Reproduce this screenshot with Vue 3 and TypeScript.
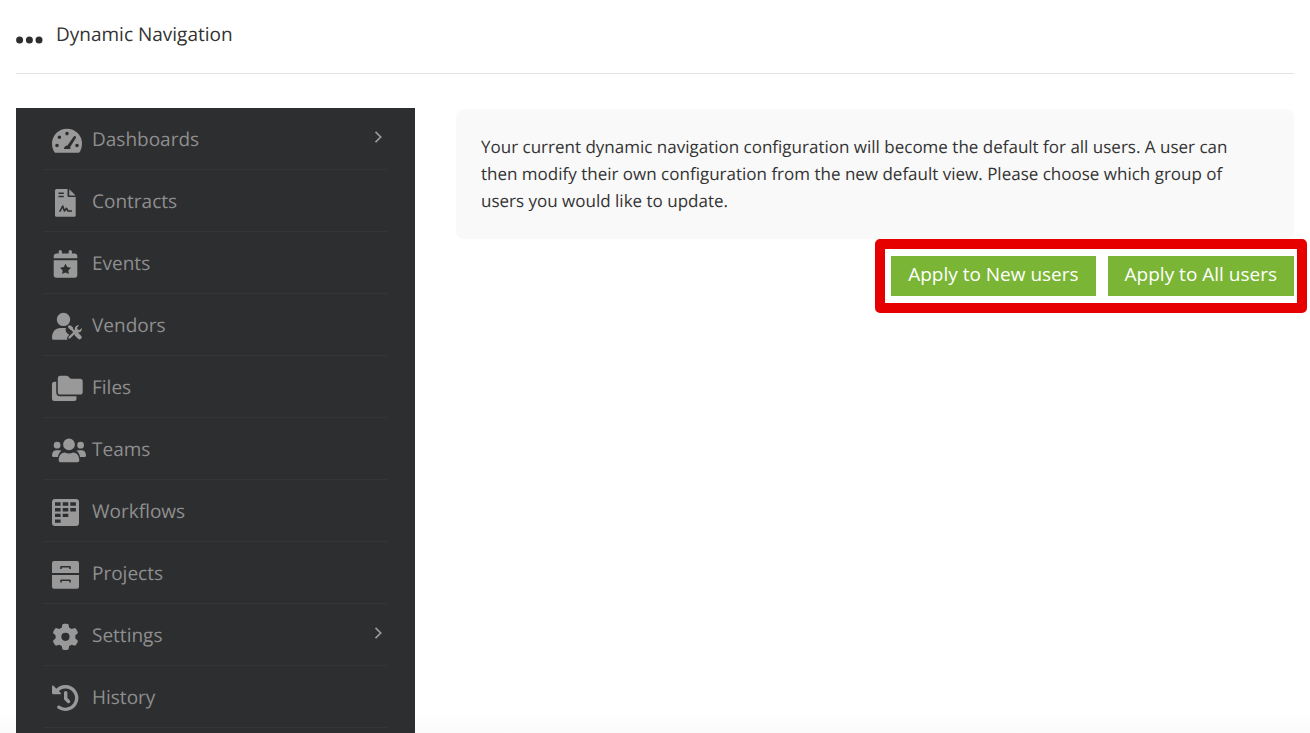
<script setup lang="ts">
interface Icon {
  body?: string
  outline?: string
  cut?: string
  line?: string
  top?: string
  topLine?: string
  transform?: string
}

interface NavItem {
  label: string
  icon: Icon
  expandable?: boolean
}

const gear =
  'M495.9 166.6c3.2 8.7 .5 18.4-6.4 24.6l-43.3 39.4c1.1 8.3 1.7 16.8 1.7 25.4s-.6 17.1-1.7 25.4l43.3 39.4c6.9 6.2 9.6 15.9 6.4 24.6c-4.4 11.9-9.7 23.3-15.8 34.3l-4.7 8.1c-6.6 11-14 21.4-22.1 31.2c-5.9 7.2-15.7 9.6-24.5 6.8l-55.7-17.7c-13.4 10.3-28.2 18.9-44 25.4l-12.5 57.1c-2 9.1-9 16.3-18.2 17.8c-13.8 2.3-28 3.5-42.5 3.5s-28.7-1.2-42.5-3.5c-9.2-1.5-16.2-8.7-18.2-17.8l-12.5-57.1c-15.8-6.5-30.6-15.1-44-25.4L83.1 425.9c-8.8 2.8-18.6 .3-24.5-6.8c-8.1-9.8-15.5-20.2-22.1-31.2l-4.7-8.1c-6.1-11-11.4-22.4-15.8-34.3c-3.2-8.7-.5-18.4 6.4-24.6l43.3-39.4C64.6 273.1 64 264.6 64 256s.6-17.1 1.7-25.4L22.4 191.2c-6.9-6.2-9.6-15.9-6.4-24.6c4.4-11.9 9.7-23.3 15.8-34.3l4.7-8.1c6.6-11 14-21.4 22.1-31.2c5.9-7.2 15.7-9.6 24.5-6.8l55.7 17.7c13.4-10.3 28.2-18.9 44-25.4l12.5-57.1c2-9.1 9-16.3 18.2-17.8C227.3 1.2 241.5 0 256 0s28.7 1.2 42.5 3.5c9.2 1.5 16.2 8.7 18.2 17.8l12.5 57.1c15.8 6.5 30.6 15.1 44 25.4l55.7-17.7c8.8-2.8 18.6-.3 24.5 6.8c8.1 9.8 15.5 20.2 22.1 31.2l4.7 8.1c6.1 11 11.4 22.4 15.8 34.3zM256 336a80 80 0 1 0 0-160 80 80 0 1 0 0 160z'

const items: NavItem[] = [
  {
    label: 'Dashboards',
    expandable: true,
    icon: {
      body: 'M15 3.7a15 15 0 0 1 15 15c0 2.9-.7 5.4-2 7.8-.5.9-1 1.2-2 1.2H4c-1 0-1.5-.3-2-1.2A15.300 15.300 0 0 1 0 18.700a15 15 0 0 1 15-15z',
      cut: 'M13.2 8.600a1.800 1.800 0 1 0 3.600 0a1.800 1.800 0 1 0-3.600 0zM5.600 12.300a1.800 1.800 0 1 0 3.600 0a1.800 1.800 0 1 0-3.600 0zM3.200 20.500a1.800 1.800 0 1 0 3.600 0a1.800 1.800 0 1 0-3.600 0zM23.200 20.500a1.800 1.800 0 1 0 3.600 0a1.800 1.800 0 1 0-3.600 0zM12 24c0-2.200 1.400-3.600 3.400-3.600l6.400-8.800c1-1.300 2.800-.1 2 1.300l-5.600 9c.3.700.3 1.400.1 2.100z'
    }
  },
  {
    label: 'Contracts',
    icon: {
      body: 'M4.500 2H15.500V8.500C15.500 9.500 16 10 17 10H23.700V28.200Q23.700 29.700 22.200 29.700H4.500Q3 29.700 3 28.200V3.500Q3 2 4.500 2zM17.300 2.200L23.600 8.500H17.300z',
      line: 'M6.500 6.200H11.800M6.500 9.500H11.800M7.200 24H8.200L10.700 19L12.400 24L14.500 21.300L16 24H20'
    }
  },
  {
    label: 'Events',
    icon: {
      body: 'M1.700 9.200V7.200Q1.700 4.500 4.300 4.500H6.700V2.500Q6.700 1 8.300 1T9.900 2.500V4.500H16.700V2.500Q16.700 1 18.300 1T19.900 2.500V4.500H22.600Q25.300 4.500 25.300 7.200V9.200zM1.700 11.200H25.300V26Q25.300 28.700 22.600 28.700H4.300Q1.700 28.700 1.700 26z',
      cut: 'M13.500 14.700L15.200 18.100L19 18.700L16.300 21.400L16.900 25.100L13.500 23.400L10.100 25.100L10.700 21.400L8 18.700L11.800 18.100z'
    }
  },
  {
    label: 'Vendors',
    icon: {
      body: 'M4.800 8.400a6.700 6.700 0 1 0 13.400 0a6.700 6.700 0 1 0-13.400 0zM0 27.200C0 20.500 3.500 17 8.500 17h5.600c-.9 1.700-.5 3.900 1.100 5.300l2 1.500-1.700 2.100c-.7 1-.6 1.900.1 2.800H1.500Q0 28.700 0 27.200z',
      topLine: 'M17.200 15.500L27.700 26M17.500 26.500L24.500 19.500',
      top: 'M16 15.200l2.800-.8 2.200 2.200v2.200l-2.200.2-2.300-2zM23.200 19.800c-1.400-3 .8-5.900 4-5.500l-2.100 2.300.4 2 2 .5 2.200-2.200c.8 3.200-2.300 5.500-5.200 4.200zM22.700 22.700l2.600-1.700 4 4c1.500 1.700-1.200 4.500-3 3l-3.800-3.800z'
    }
  },
  {
    label: 'Files',
    icon: {
      body: 'M8.500 2.700H14.600C16.800 2.700 17.400 5.800 19.400 5.800H28Q30.700 5.800 30.700 8.500V18.900Q30.700 21.600 28 21.600H8.500Q5.800 21.600 5.800 18.900V5.400Q5.800 2.700 8.500 2.700zM2.500 8.800H4.200V19C4.200 21.800 5.500 23.200 8.300 23.200H24.500V25.500Q24.500 28 22 28H2.500Q0 28 0 25.500V11.300Q0 8.800 2.500 8.800z'
    }
  },
  {
    label: 'Teams',
    icon: {
      body: 'M11.100 9.400a5.900 5.900 0 1 0 11.800 0a5.900 5.900 0 1 0-11.800 0zM1.700 10.200a3.400 3.400 0 1 0 6.800 0a3.400 3.400 0 1 0-6.800 0zM25.200 10.200a3.400 3.400 0 1 0 6.800 0a3.400 3.400 0 1 0-6.800 0zM6.700 25.500c0-5.100 2.600-8 6.300-8 2.500 1.200 5.500 1.200 8 0 3.700 0 6.300 2.900 6.300 8q0 1.800-1.800 1.800h-17q-1.800 0-1.800-1.800zM0 20.500c0-3.600 1.800-5.300 4.500-5.300h2.800c1 0 1.600.2 2.200.6-2 1.500-3.200 3.700-3.600 6.200H1.500Q0 22 0 20.500zM34 20.500c0-3.600-1.800-5.300-4.500-5.300h-2.800c-1 0-1.600.2-2.200.6 2 1.500 3.200 3.700 3.600 6.200h4.400Q34 22 34 20.500z'
    }
  },
  {
    label: 'Workflows',
    icon: {
      body: 'M3 2H24Q27 2 27 5V26Q27 29 24 29H3Q0 29 0 26V5Q0 2 3 2z',
      cut: 'M3 5.300h5.600v3.400H3zM10.700 5.300h5.600v3.400h-5.600zM18.300 5.300h5.600v3.400h-5.600zM3 11h5.600v3.400H3zM10.700 11h5.600v3.400h-5.600zM18.300 11h5.600v3.400h-5.600zM3 16.700h5.600v3.400H3zM10.700 16.700h5.600v3.400h-5.600zM3 22.400h5.600v3.400H3z'
    }
  },
  {
    label: 'Projects',
    icon: {
      body: 'M2 2H25Q27 2 27 4V14H0V4Q0 2 2 2zM0 16H27V27.700Q27 29.700 25 29.700H2Q0 29.700 0 27.700z',
      line: 'M9 10V7.700H18V10M9 23.500V21.200H18V23.500'
    }
  },
  {
    label: 'Settings',
    expandable: true,
    icon: { body: gear, transform: 'translate(.3 2.700) scale(.0514)' }
  },
  {
    label: 'History',
    icon: {
      body: 'M0 3.300C0 2.300 1.200 2.300 1.700 2.900L8.600 9.800C9.400 10.600 9 11.300 8 11.300H1.500Q0 11.300 0 9.800z',
      outline: 'M4.200 8.200C6.500 5.300 9.700 3.700 13.500 3.700A11.300 11.300 0 1 1 6.800 24.200M13.700 9.700V15.700L16.500 18.500'
    }
  }
]
</script>

<template>
  <div class="page">
    <header class="header">
      <svg class="dots" viewBox="0 0 28 8" aria-hidden="true">
        <circle cx="3.600" cy="4" r="3.500" />
        <circle cx="13.400" cy="4" r="3.500" />
        <circle cx="23" cy="4" r="3.500" />
      </svg>
      <h1 class="title">Dynamic Navigation</h1>
    </header>

    <div class="columns">
      <nav class="sidebar" aria-label="Main">
        <ul class="list">
          <li v-for="item in items" :key="item.label" class="row">
            <a class="link" href="#">
              <svg class="icon" viewBox="0 0 36 32" aria-hidden="true">
                <path v-if="item.icon.body" class="solid" :d="item.icon.body" :transform="item.icon.transform" />
                <path v-if="item.icon.outline" class="outline" :d="item.icon.outline" />
                <path v-if="item.icon.cut" class="cut" :d="item.icon.cut" />
                <path v-if="item.icon.line" class="line" :d="item.icon.line" />
                <path v-if="item.icon.topLine" class="top-line" :d="item.icon.topLine" />
                <path v-if="item.icon.top" class="solid" :d="item.icon.top" />
              </svg>
              <span class="label">{{ item.label }}</span>
              <svg v-if="item.expandable" class="chevron" viewBox="0 0 8 12" aria-hidden="true">
                <path d="M1.500 .8L6.700 6L1.500 11.200" />
              </svg>
            </a>
          </li>
        </ul>
      </nav>

      <main class="content">
        <p class="notice">
          Your current dynamic navigation configuration will become the default for all users. A user can then modify
          their own configuration from the new default view. Please choose which group of users you would like to
          update.
        </p>
        <div class="actions">
          <button class="button" type="button">Apply to New users</button>
          <button class="button" type="button">Apply to All users</button>
        </div>
      </main>
    </div>
  </div>
</template>

<style>
body {
  margin: 0;
}
</style>

<style scoped>
.page {
  display: flex;
  flex-direction: column;
  box-sizing: border-box;
  min-height: 100vh;
  padding: 0 16px;
  background: linear-gradient(to top, #fafafa, #fff 20px);
  color: #333;
  font-family: "Open Sans", "Noto Sans", sans-serif;
  font-size: 19px;
  text-rendering: geometricPrecision;
}

.header {
  display: flex;
  align-items: flex-start;
  gap: 12px;
  padding: 20px 0 25px;
  border-bottom: 1px solid #e4e4e4;
}

.dots {
  width: 28px;
  height: 8px;
  margin-top: 16px;
  fill: #2d2e30;
}

.title {
  margin: 0;
  font-size: 19px;
  font-weight: 400;
  line-height: 28px;
}

.columns {
  display: grid;
  flex: 1;
  grid-template-columns: minmax(240px, 399fr) 838fr;
  gap: 41px;
  padding-top: 34px;
}

.sidebar {
  padding: 0 27px;
  background: #2d2e30;
}

.list {
  margin: 0;
  padding: 0;
  list-style: none;
}

.row {
  border-bottom: 1px solid #343537;
}

.link {
  display: flex;
  align-items: center;
  height: 61px;
  padding: 0 6px 0 9px;
  color: #8f8f8f;
  text-decoration: none;
}

.icon {
  width: 36px;
  height: 32px;
  margin-top: 4px;
  margin-right: 4px;
}

.solid {
  fill: #999;
}

.outline {
  fill: none;
  stroke: #999;
  stroke-width: 3.400;
  stroke-linecap: round;
  stroke-linejoin: round;
}

.cut {
  fill: #2d2e30;
}

.line {
  fill: none;
  stroke: #2d2e30;
  stroke-width: 1.600;
  stroke-linejoin: round;
}

.top-line {
  fill: none;
  stroke: #999;
  stroke-width: 2.400;
  stroke-linecap: round;
}

.label {
  flex: 1;
}

.chevron {
  width: 8px;
  height: 12px;
  margin-bottom: 4px;
  fill: none;
  stroke: #999;
  stroke-width: 1.700;
}

.content {
  padding-top: 1px;
}

.notice {
  margin: 0 0 17px;
  padding: 24px 40px 25px 25px;
  border-radius: 8px;
  background: #f9f9f9;
  font-size: 17px;
  line-height: 27px;
}

.actions {
  position: relative;
  display: flex;
  justify-content: flex-end;
  gap: 12px;
  width: fit-content;
  margin-left: auto;
}

.actions::after {
  position: absolute;
  inset: -17px -13px -17px -16px;
  border: 10px solid #e60000;
  border-radius: 5px;
  content: "";
  pointer-events: none;
}

.button {
  height: 40px;
  padding: 0 17px 5px;
  border: 0;
  background: #7ab535;
  color: #fff;
  font: inherit;
}
</style>
